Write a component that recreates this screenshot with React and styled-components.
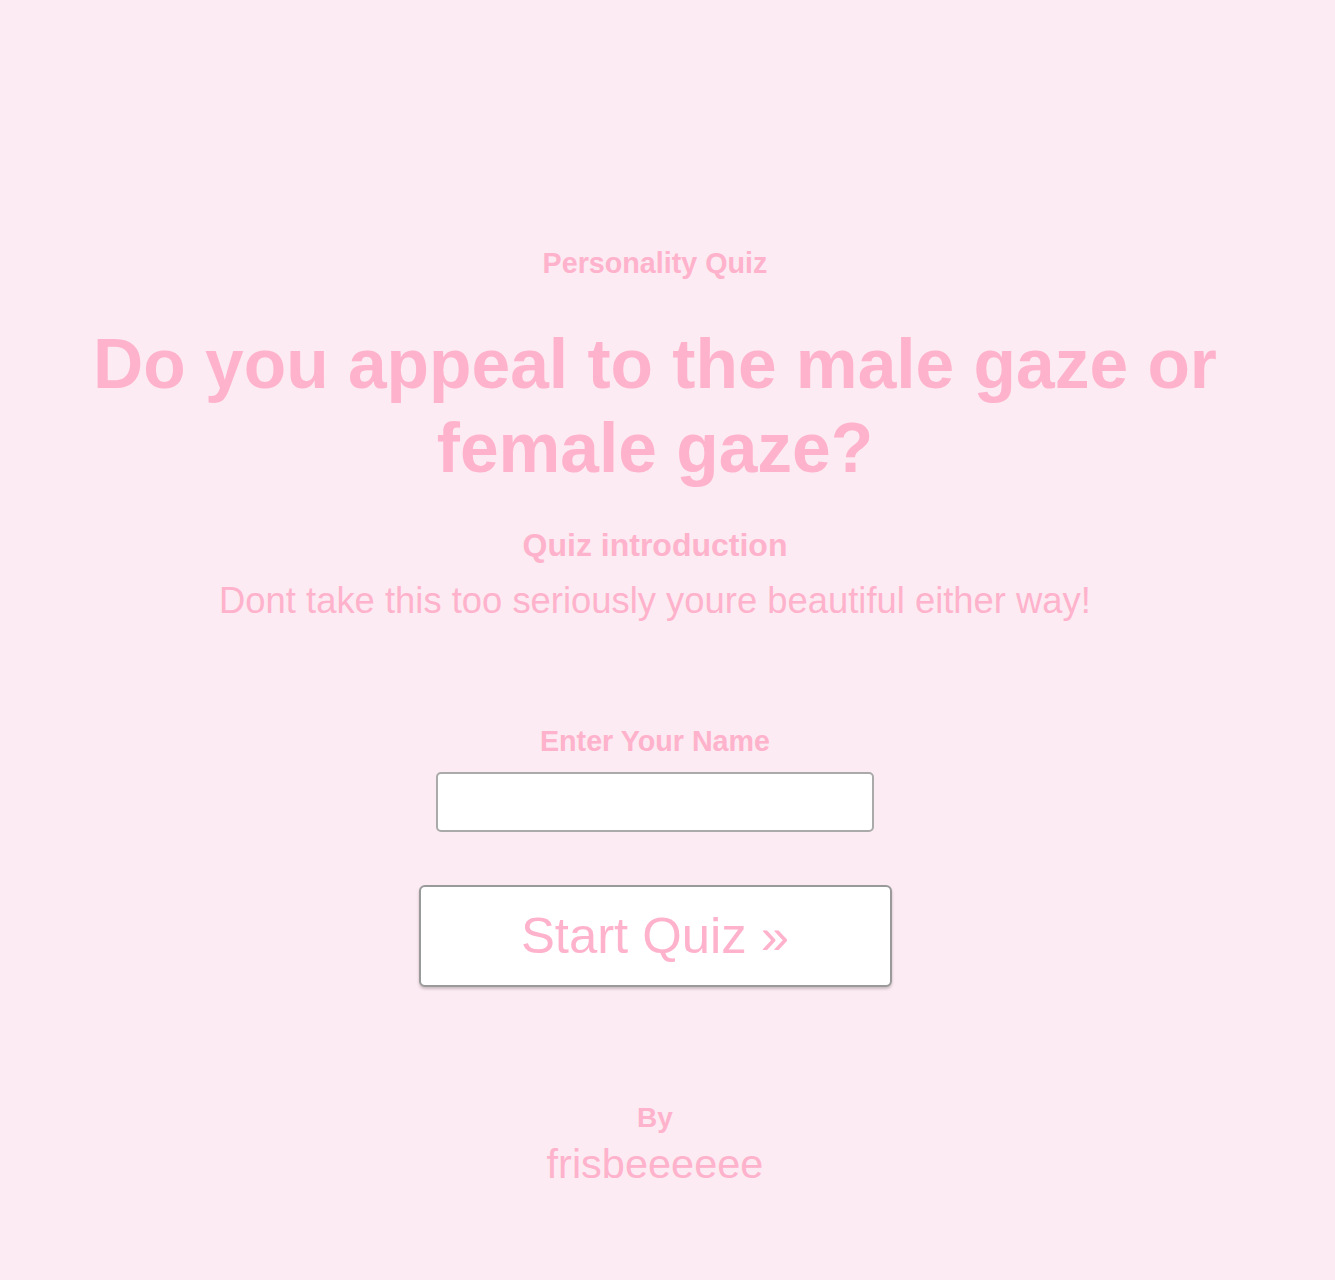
import styled, { createGlobalStyle } from 'styled-components';

const GlobalStyle = createGlobalStyle`
  html, body {
    margin: 0;
    padding: 0;
    background: #fcebf2;
  }
  body {
    font-family: "Liberation Sans", Arial, sans-serif;
  }
`;

const PINK = '#ffb2cb';

const App = () => (
  <>
    <GlobalStyle />
    <Page>
      <Kicker>Personality Quiz</Kicker>
      <Title>Do you appeal to the male gaze or female gaze?</Title>
      <SectionLabel>Quiz introduction</SectionLabel>
      <Intro>Dont take this too seriously youre beautiful either way!</Intro>
      <NameForm onSubmit={(e) => e.preventDefault()}>
        <FieldLabel htmlFor="name">Enter Your Name</FieldLabel>
        <NameInput id="name" type="text" />
        <StartButton type="submit">Start Quiz »</StartButton>
      </NameForm>
      <Byline>By</Byline>
      <Author>frisbeeeeee</Author>
    </Page>
  </>
);

const Page = styled.main`
  width: 1310px;
  min-height: 1280px;
  padding-top: 247px;
  box-sizing: border-box;
  display: flex;
  flex-direction: column;
  align-items: center;
  text-align: center;
  color: ${PINK};
`;

const Kicker = styled.div`
  font-size: 28.7px;
  font-weight: 700;
  line-height: 33.6px;
`;

const Title = styled.h1`
  margin: 41px 0 0;
  max-width: 1140px;
  font-size: 69.5px;
  font-weight: 700;
  line-height: 84px;
`;

const SectionLabel = styled.h2`
  margin: 36px 0 0;
  font-size: 32px;
  font-weight: 700;
  line-height: 1.2;
`;

const Intro = styled.p`
  margin: 15px 0 0;
  font-size: 36.4px;
  font-weight: 400;
  line-height: 43.2px;
`;

const NameForm = styled.form`
  margin-top: 103px;
  display: flex;
  flex-direction: column;
  align-items: center;
`;

const FieldLabel = styled.label`
  font-size: 28.7px;
  font-weight: 700;
  line-height: 33.6px;
`;

const NameInput = styled.input`
  margin-top: 13px;
  width: 438px;
  height: 60px;
  box-sizing: border-box;
  border: 2px solid #aaa;
  border-radius: 5px;
  background: #fff;
  font-family: inherit;
  font-size: 24px;
  padding: 0 10px;
  outline: none;
`;

const StartButton = styled.button`
  margin-top: 53px;
  width: 473px;
  height: 102px;
  box-sizing: border-box;
  border: 2px solid #9a9a9a;
  border-radius: 6px;
  background: #fff;
  box-shadow: 0 2px 3px rgba(0, 0, 0, 0.2);
  color: ${PINK};
  font-family: inherit;
  font-size: 50.8px;
  font-weight: 400;
  cursor: pointer;
`;

const Byline = styled.div`
  margin-top: 114px;
  font-size: 28px;
  font-weight: 700;
  line-height: 1.2;
`;

const Author = styled.div`
  margin-top: 5px;
  font-size: 41.5px;
  font-weight: 400;
  line-height: 1.2;
`;

export default App;
